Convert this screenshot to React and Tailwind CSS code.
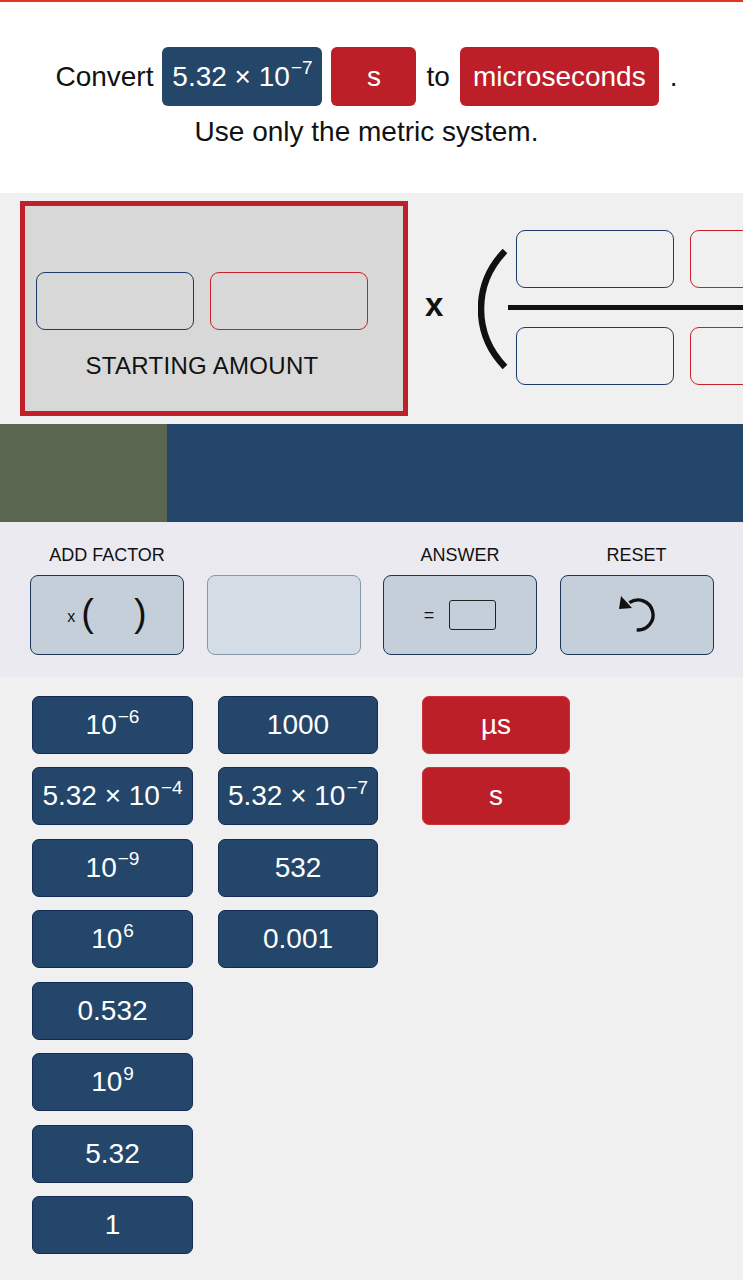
import React from "react";

const font = { fontFamily: '"Liberation Sans", Arial, sans-serif' };

const Sup = ({ base, exp }) => (
  <span>
    {base}
    <sup className="text-[19px] top-[-0.6em] ml-[1px]">{exp}</sup>
  </span>
);

const Tile = ({ children, red, w = "w-[161px]" }) => (
  <div
    className={`${w} h-[58px] rounded-[7px] flex items-center justify-center text-white text-[28px] border ${
      red ? "bg-[#bd1f29] border-[#c9343c]" : "bg-[#23466a] border-[#142b52]"
    }`}
  >
    {children}
  </div>
);

const ResetIcon = () => (
  <svg width="40" height="40" viewBox="0 0 40 40" fill="none">
    <path d="M12.4 7.7 A15 15 0 1 1 19.7 34.9" stroke="#111" strokeWidth="3.4" fill="none" />
    <polygon points="4,1 2,14 15,13" fill="#111" />
  </svg>
);

export default function App() {
  const col1 = [
    <Sup base="10" exp="−6" />,
    <span>5.32 × <Sup base="10" exp="−4" /></span>,
    <Sup base="10" exp="−9" />,
    <Sup base="10" exp="6" />,
    "0.532",
    <Sup base="10" exp="9" />,
    "5.32",
    "1",
  ];
  const col2 = ["1000", <span>5.32 × <Sup base="10" exp="−7" /></span>, "532", "0.001"];
  const col3 = ["µs", "s"];

  return (
    <div className="w-[743px] min-h-[1280px] bg-[#f0f0f0] text-[#111]" style={font}>
      <div className="h-[2px] bg-[#e0371f]" />

      {/* Question */}
      <div className="bg-white h-[191px] pt-[45px] pr-[10px] flex flex-col items-center">
        <div className="flex items-center gap-[9px] text-[28px] leading-none">
          <span>Convert</span>
          <div className="w-[160px] h-[59px] rounded-[6px] bg-[#234669] text-white flex items-center justify-center">
            <span>5.32 × <Sup base="10" exp="−7" /></span>
          </div>
          <div className="w-[85px] h-[59px] rounded-[6px] bg-[#bd1f29] text-white flex items-center justify-center">s</div>
          <span className="px-[1px]">to</span>
          <div className="w-[199px] h-[59px] rounded-[6px] bg-[#bd1f29] text-white flex items-center justify-center">
            microseconds
          </div>
          <span className="ml-[2px]">.</span>
        </div>
        <p className="mt-[9px] text-[28px] leading-[34px]">Use only the metric system.</p>
      </div>

      {/* Work area */}
      <div className="h-[231px] bg-[#f0f0f0] flex items-center pl-[20px] overflow-hidden">
        <div className="shrink-0 w-[388px] h-[215px] border-[5px] border-[#c0202a] bg-[#d8d8d8] pt-[66px] pl-[11px]">
          <div className="w-[332px] flex flex-col items-center">
            <div className="flex gap-[16px]">
              <div className="w-[158px] h-[58px] rounded-[9px] border-[1.5px] border-[#1d3a6b]" />
              <div className="w-[158px] h-[58px] rounded-[9px] border-[1.5px] border-[#c8202a]" />
            </div>
            <p className="mt-[21px] text-[24px] leading-[29px] tracking-[0.3px]">STARTING AMOUNT</p>
          </div>
        </div>
        <span className="ml-[17px] text-[33px] font-bold leading-none mb-[8px]">x</span>
        <svg width="30" height="120" viewBox="0 0 30 120" className="ml-[35px] shrink-0">
          <path d="M27 2 C -5 35, -5 85, 27 118" stroke="#111" strokeWidth="6.5" fill="none" />
        </svg>
        <div className="flex flex-col shrink-0 mb-[2px]">
          <div className="flex gap-[16px] pl-[8px]">
            <div className="w-[158px] h-[58px] rounded-[9px] border-[1.5px] border-[#1d3a6b]" />
            <div className="w-[158px] h-[58px] rounded-[9px] border-[1.5px] border-[#c8202a]" />
          </div>
          <div className="h-[5px] w-[400px] bg-[#111] my-[17px]" />
          <div className="flex gap-[16px] pl-[8px]">
            <div className="w-[158px] h-[58px] rounded-[9px] border-[1.5px] border-[#1d3a6b]" />
            <div className="w-[158px] h-[58px] rounded-[9px] border-[1.5px] border-[#c8202a]" />
          </div>
        </div>
      </div>

      {/* Band */}
      <div className="h-[98px] flex">
        <div className="w-[167px] bg-[#5a6650]" />
        <div className="flex-1 bg-[#23466a]" />
      </div>

      {/* Toolbar */}
      <div className="h-[155px] bg-[#eaeaf0] pt-[22px] px-[30px] flex gap-[22.5px]">
        <div className="w-[154px] flex flex-col items-center">
          <span className="text-[18px] leading-[22px] h-[22px]">ADD FACTOR</span>
          <div className="mt-[9px] w-[154px] h-[80px] rounded-[8px] bg-[#c4cfda] border-[1.5px] border-[#1d3557] flex items-center justify-center">
            <span className="text-[16px] mr-[6px] mt-[4px]">x</span>
            <span className="text-[38px] leading-none mb-[4px]">(</span>
            <span className="w-[40px]" />
            <span className="text-[38px] leading-none mb-[4px]">)</span>
          </div>
        </div>
        <div className="w-[154px] flex flex-col items-center">
          <span className="h-[22px]" />
          <div className="mt-[9px] w-[154px] h-[80px] rounded-[8px] bg-[#d4dce5] border-[1.5px] border-[#8798aa]" />
        </div>
        <div className="w-[154px] flex flex-col items-center">
          <span className="text-[18px] leading-[22px] h-[22px]">ANSWER</span>
          <div className="mt-[9px] w-[154px] h-[80px] rounded-[8px] bg-[#c4cfda] border-[1.5px] border-[#1d3557] flex items-center justify-center">
            <span className="text-[18px] mr-[15px]">=</span>
            <div className="w-[47px] h-[30px] rounded-[3px] border-[1.5px] border-[#222]" />
          </div>
        </div>
        <div className="w-[154px] flex flex-col items-center">
          <span className="text-[18px] leading-[22px] h-[22px]">RESET</span>
          <div className="mt-[9px] w-[154px] h-[80px] rounded-[8px] bg-[#c4cfda] border-[1.5px] border-[#1d3557] flex items-center justify-center">
            <ResetIcon />
          </div>
        </div>
      </div>

      {/* Tiles */}
      <div className="pt-[19px] pl-[32px] flex items-start">
        <div className="flex flex-col gap-[13.43px]">
          {col1.map((c, i) => (
            <Tile key={i}>{c}</Tile>
          ))}
        </div>
        <div className="flex flex-col gap-[13.43px] ml-[25px]">
          {col2.map((c, i) => (
            <Tile key={i} w="w-[160px]">{c}</Tile>
          ))}
        </div>
        <div className="flex flex-col gap-[13.43px] ml-[44px]">
          {col3.map((c, i) => (
            <Tile key={i} red w="w-[148px]">{c}</Tile>
          ))}
        </div>
      </div>
    </div>
  );
}
